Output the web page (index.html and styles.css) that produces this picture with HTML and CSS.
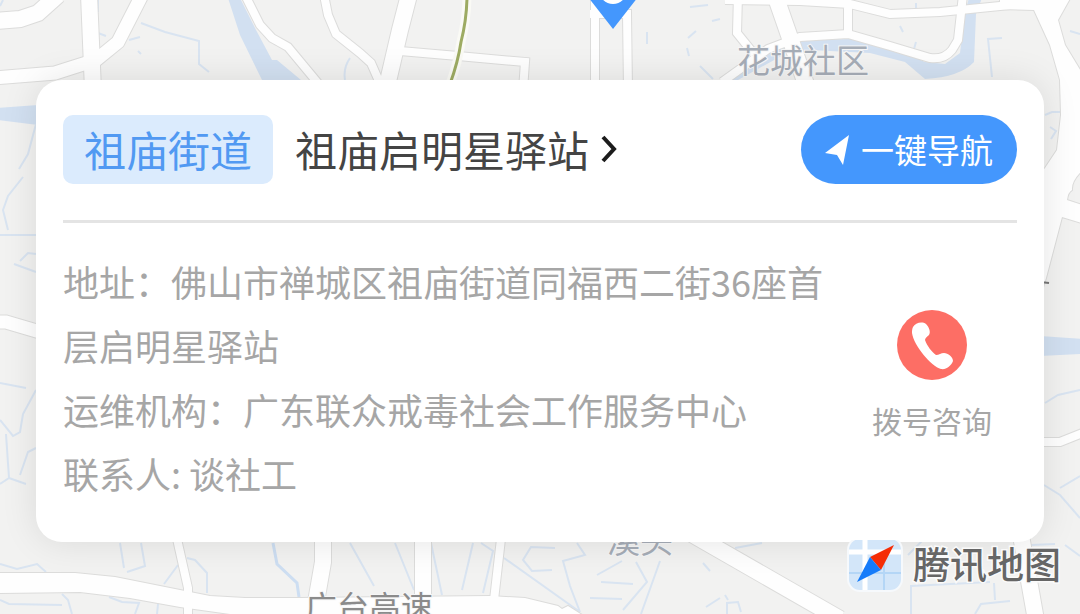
FILE: index.html
```html
<!DOCTYPE html>
<html lang="zh-CN">
<head>
    <meta charset="UTF-8">
    <meta name="viewport" content="width=device-width, initial-scale=1.0">
    <title>祖庙启明星驿站</title>
    <link rel="stylesheet" href="styles.css">
</head>
<body>

<main class="map-page">

    <!-- Map background -->
    <svg class="map" viewBox="0 0 1080 614" preserveAspectRatio="xMidYMid slice">
        <defs>
            <g id="roads-wide">
                <path d="M-5 21L20 19L38 13L58-5M89-5L93 90M409-5L400 30L386 90M775-5L790 38L808 90"/>
                <path d="M323 530V562L316 602M423 530V602M690 533L840 619M1020 530L1036 620"/>
            </g>
            <g id="roads-mid">
                <path d="M142-5L118 42L96 60L55 73L-5 78M-5 322L6 322L40 332"/>
            </g>
            <g id="roads-thin">
                <path d="M245-5L260 25L272 38L288 47L322 88M324-5L328 15L336 34L360 53L371 63L382 88"/>
                <path d="M400 51L458 56L525 62L523 90M595-5V90M590 14H627L628 90M738-5L737 33L754 54"/>
                <path d="M725 0L800 1L850 4L890 14L940 12L1000 6L1040 2M848 4V34"/>
                <path d="M722 82L768 49L800 37L848 34L890 46L930 58Q944 60 952 50L958 40L963-5"/>
                <path d="M1030 442L1060 442L1085 432M175 530L188 588V620M502 530L494 600"/>
            </g>
            <g id="junctions">
                <path d="M1000-5V9L1034 10L1050 45L1060 80L1061 115L1057 150L1045 168L1020 200V360L1046 278L1062 217L1085 224V206L1067 200Q1068 192 1072 190Q1071 180 1085 168V78L1065 45L1058 20L1072-5Z"/>
                <path d="M-5 573L75 573L115 577L165 587L210 596L245 598H300L490 596L525 598L558 606L562 609L568 606L590 620H260L230 614L180 607L130 598L80 592L-5 593Z"/>
            </g>
        </defs>

        <!-- Rivers -->
        <g class="river">
            <path d="M228-2H240L256 30L272 60L277 60L301 80H262L240 35Z"/>
            <path d="M803 40L850 39L895 48L925 62L945 64L960 53L965 12L969-2H982L976 14L974 62Q960 77 925 79L905 62L870 53L810 50L785 54L738 80H724L760 56Z"/>
            <path d="M-2 108L38 105V125L-2 120ZM1040 336L1082 339V354L1040 356Z"/>
        </g>

        <!-- Streams and ditches -->
        <g class="stream">
            <path d="M0 6L3 0M98 0V12M98 33L106 36M129 40L140 37M141 23L165 32L199 41V64L209 72M138 51L141 54M350 58Q343 68 345 80"/>
            <path d="M647 32V44M690 7L708 5M712 21L720 19M696 31L688 38M687 48L689 56M700 66L713 79M916 3V8M900 26L903 32M916 42L914 49M992 77L988 39L1002 38M1045 115L1052 112L1062 112M1070 31L1080 34M1050 127L1056 131L1051 139"/>
            <path d="M36 124L28 154L19 169M23 177L8 196L3 210L8 230M0 235H36M14 264L36 272M20 261L28 253L36 254M0 383L26 388M0 420L13 436L20 432L23 414L36 390M6 434L9 478L0 484M9 478L26 484M20 475L28 452L36 448"/>
            <path d="M0 564L17 569L37 564L46 572M120 543L124 568M141 543L145 566L127 572M164 584L178 565M187 558L195 560L207 573L207 593M350 543L374 586M395 543L414 590M431 543L442 595M473 543L462 590M481 543L493 551L483 593"/>
            <path class="stream-wide" d="M273 543L277 564L297 583L299 597"/>
            <path d="M0 600L9 604L62 605M62 594L68 600L72 614M109 597L122 602L139 603L135 614M158 604L157 614"/>
            <path d="M504 558L580 612M555 548L531 547L523 560L532 571L552 570M577 543L585 555L563 561L570 586L580 612M597 575L622 561M601 582L633 584M590 598L622 599M660 561L641 614M636 562L647 582L623 610M703 563L710 571M706 607L720 598"/>
            <path d="M735 548L762 543M725 595L728 600M727 614V603L738 602L741 612M908 555L922 541M911 614V586L990 582M975 614L981 604L1010 601M994 583L995 600M1045 403L1058 395L1080 390M1044 485L1060 495L1080 518M1060 488L1080 476M1031 545L1055 544M1065 545L1080 556"/>
        </g>

        <!-- Road outlines first, surfaces on top -->
        <g class="casing">
            <use href="#roads-wide" class="casing-wide"/>
            <use href="#roads-mid" class="casing-mid"/>
            <use href="#roads-thin" class="casing-thin"/>
            <use href="#junctions" class="casing-junction"/>
        </g>
        <g class="road">
            <use href="#roads-wide" class="road-wide"/>
            <use href="#roads-mid" class="road-mid"/>
            <use href="#roads-thin" class="road-thin"/>
            <use href="#junctions" class="road-junction"/>
        </g>
        <path class="metro-bed" d="M467-5Q467 18 461 42Q458 62 450 84"/>
        <path class="metro" d="M467-5Q467 18 461 42Q458 62 450 84"/>
        <path class="tick" d="M1040 282L1049 283"/>

        <!-- Station pin -->
        <path class="pin" d="M588-3L613 29L638-3Z"/>
        <circle class="pin-hole" cx="613" cy="-10" r="14"/>

        <text class="place" x="737" y="73">花城社区</text>
        <text class="place" x="607" y="553">溪头</text>
        <text class="place street" x="305" y="619">广台高速</text>
    </svg>

    <!-- Station card -->
    <section class="card">
        <header class="card-header">
            <span class="tag">祖庙街道</span>
            <h1 class="title">
                <a href="#station">祖庙启明星驿站
                    <svg class="chevron" viewBox="0 0 16 28"><path d="M2 2L13 14L2 26"/></svg>
                </a>
            </h1>
            <button class="nav-button" type="button">
                <svg class="nav-icon" viewBox="0 0 24 30"><path d="M24 0L0 18L12 20L18 30Z"/></svg>
                一键导航
            </button>
        </header>
        <div class="card-body">
            <div class="details">
                <p>地址：佛山市禅城区祖庙街道同福西二街36座首层启明星驿站</p>
                <p>运维机构：广东联众戒毒社会工作服务中心</p>
                <p>联系人: 谈社工</p>
            </div>
            <a class="call" href="#call">
                <svg class="call-icon" viewBox="0 0 70 70">
                    <circle cx="35" cy="35" r="35"/>
                    <path d="M16 17C18 13 25 11 29 14C32 17 34 22 32 25C30 27 28 28 28 30C30 36 35 42 39 45C42 45 44 43 47 43C51 43 56 47 56 51C54 56 49 60 44 59C34 56 17 36 15 23C15 21 15 19 16 17Z"/>
                </svg>
                拨号咨询
            </a>
        </div>
    </section>

    <!-- Map provider -->
    <div class="provider">
        <svg class="provider-logo" viewBox="0 0 56 52">
            <rect x="0" y="-3" width="56" height="55" rx="13" fill="#f6f9fc"/>
            <rect x="2" y="-1" width="52" height="51" rx="11" fill="#d3e6f9"/>
            <path d="M18-1V50M2 12H54" stroke="#fff" stroke-width="5"/>
            <path d="M2 33H54M37 17V50" stroke="#b4d6f6" stroke-width="2"/>
            <path d="M47 5L23 17L34 30Z" fill="#f52d06"/>
            <path d="M23 17L34 30L10 42Z" fill="#147bfa"/>
        </svg>
        <span>腾讯地图</span>
    </div>

</main>

</body>
</html>
```
FILE: styles.css
```css
* {
    box-sizing: border-box;
}

body {
    margin: 0;
    font-family: "Noto Sans CJK SC", sans-serif;
    background-color: #f2f2f1;
}

.map-page {
    position: relative;
    min-height: 100vh;
    padding: 80px 36px 72px;
    overflow: hidden;
}

/* Map */
.map {
    position: absolute;
    top: 0;
    left: 0;
    width: 100%;
    height: 100%;
    fill: none;
}

.river { fill: #d2e0f1; }
.stream { stroke: #d9e4f1; stroke-width: 2; }
.stream-wide { stroke: #cddef2; stroke-width: 3; }

.casing { stroke: #dcdcdb; }
.casing-wide { stroke-width: 18px; }
.casing-mid { stroke-width: 15px; }
.casing-thin { stroke-width: 10px; }
.casing-junction { stroke-width: 2px; }

.road { stroke: #fefefe; }
.road-wide { stroke-width: 16px; }
.road-mid { stroke-width: 13px; }
.road-thin { stroke-width: 8px; }
.road-junction { stroke: none; fill: #fefefe; }

.metro-bed { stroke: #fafaf5; stroke-width: 9; }
.metro { stroke: #9dab62; stroke-width: 3; }
.tick { stroke: #777777; stroke-width: 2; }

.pin { fill: #4497fd; }
.pin-hole { fill: #ffffff; }

.place {
    font-size: 33px;
    fill: #a6adb7;
    stroke: #f6f6f6;
    stroke-width: 2px;
    paint-order: stroke;
}

.street {
    font-size: 32px;
    fill: #8b8b8b;
}

/* Card */
.card {
    position: relative;
    padding: 35px 27px 37px;
    border-radius: 26px;
    background-color: #ffffff;
    box-shadow: 0 0 36px rgba(0, 0, 0, 0.1);
}

.card-header {
    display: flex;
    align-items: center;
    padding-bottom: 36px;
    border-bottom: 3px solid #e4e4e4;
}

.tag {
    height: 69px;
    padding: 0 21px;
    border-radius: 10px;
    font-size: 42px;
    line-height: 67px;
    color: #5199f2;
    background-color: #dbebfd;
}

.title {
    flex: 1;
    height: 69px;
    margin: 0 0 0 22px;
    font-size: 42px;
    font-weight: 400;
    line-height: 67px;
}

.title a {
    display: flex;
    align-items: center;
    gap: 12px;
    color: #444444;
    text-decoration: none;
}

.chevron {
    width: 16px;
    height: 28px;
    fill: none;
    stroke: #1c1c1c;
    stroke-width: 4;
}

.nav-button {
    display: flex;
    align-items: center;
    gap: 12px;
    padding: 0 24px;
    border: none;
    border-radius: 35px;
    font-family: inherit;
    font-size: 33px;
    line-height: 69px;
    color: #ffffff;
    background-color: #4497fd;
    cursor: pointer;
}

.nav-icon {
    width: 24px;
    height: 30px;
    fill: #ffffff;
}

.card-body {
    display: flex;
    align-items: flex-start;
    padding-top: 26px;
}

.details {
    flex: 1;
    font-size: 36px;
    line-height: 64px;
    color: #a6a6a6;
}

.details p {
    margin: 0;
}

.call {
    display: flex;
    flex-direction: column;
    align-items: center;
    gap: 20px;
    width: 170px;
    padding-top: 61px;
    font-size: 30px;
    line-height: 40px;
    color: #a6a6a6;
    text-decoration: none;
}

.call-icon {
    width: 70px;
    height: 70px;
}

.call-icon circle { fill: #fd6e65; }
.call-icon path { fill: #ffffff; }

/* Map provider mark, over the bottom right corner of the map */
.provider {
    position: absolute;
    right: 19px;
    bottom: 22px;
    display: flex;
    align-items: flex-start;
    gap: 10px;
    font-size: 37px;
    font-weight: 500;
    line-height: 46px;
    color: #666666;
    -webkit-text-stroke: 3px #fafafa;
    paint-order: stroke fill;
}

.provider-logo {
    width: 56px;
    height: 52px;
}
```
